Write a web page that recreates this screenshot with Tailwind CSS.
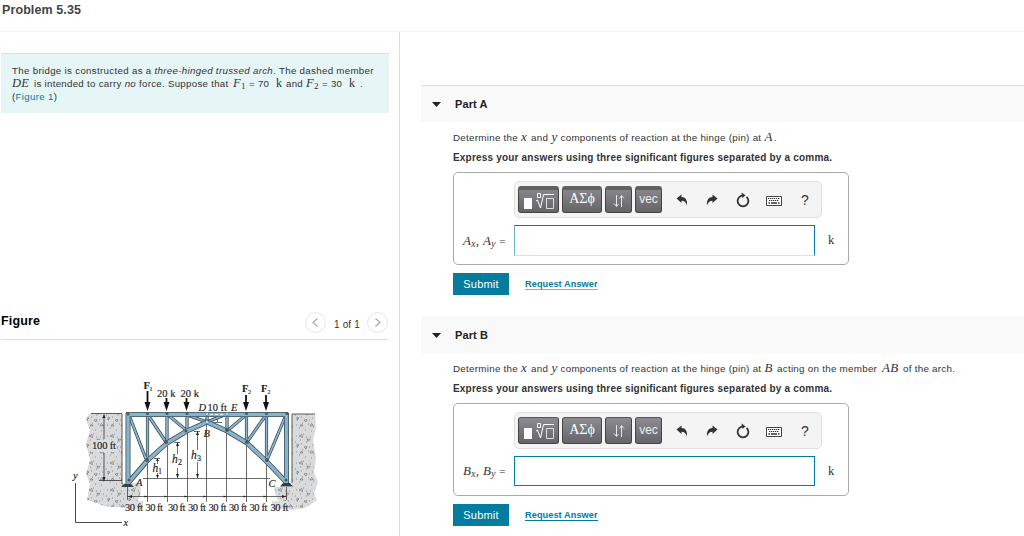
<!DOCTYPE html>
<html lang="en">
<head>
<meta charset="utf-8">
<title>Problem 5.35</title>
<script src="https://cdn.jsdelivr.net/npm/@tailwindcss/browser@4"></script>
</head>
<body class="w-[1024px] h-[536px] overflow-hidden bg-white text-[#333] font-['Liberation_Sans',sans-serif] flex flex-col">
<svg class="hidden">
  <defs>
    <symbol id="root" viewBox="0 0 32 18"><path d="M1 6h8v11H1z" fill="#fff"/><path d="M14.500 1.500h3v4h-3zM13 9l1.500-1 3 8 3-13.500H31" fill="none" stroke="#fff"/><path d="M23.500 6.500h7v10h-7z" fill="none" stroke="#ddd"/></symbol>
    <symbol id="updown" viewBox="0 0 12 14"><path d="M3.500 1v11M1 9.500l2.500 3 2-2.500M8.500 13V2M6.500 4.500l2-3 2.500 3" fill="none" stroke="#e8e8e8"/></symbol>
    <symbol id="undo" viewBox="0 0 12 12"><path d="M.5 4.500 5.500.500v2.500c4 0 6 3 5.500 8.500C10 8.500 8.500 6.800 5.500 6.800V9z" fill="#333"/></symbol>
    <symbol id="redo" viewBox="0 0 12 12"><path d="M11.500 4.500 6.500.500v2.500c-4 0-6 3-5.500 8.500C2 8.500 3.500 6.800 6.500 6.800V9z" fill="#333"/></symbol>
    <symbol id="reset" viewBox="0 0 14 16"><path d="M10.500 4.900A5.400 5.400 0 1 1 3.500 4.900Q5 3.600 7 3.500" fill="none" stroke="#333" stroke-width="1.800"/><path d="M5.500.500 9.500 3.300 6.500 6z" fill="#333"/></symbol>
    <symbol id="keys" viewBox="0 0 16 10"><path d="M.5.500h15v9H.5z" fill="#fff" stroke="#444"/><path d="M2 2.500h12M3 4.500h10" stroke="#333" stroke-dasharray="1.300 .700"/><path d="M2.500 7h1.500M5 7h6M12 7h1.500" stroke="#333" stroke-width="1.300"/></symbol>
  </defs>
</svg>
<header class="h-8 shrink-0 border-b border-[#f4f4f4] pl-[2px] pt-[2px]">
  <h1 class="text-[12.500px] leading-[16px] font-bold tracking-[0.1px] text-[#444]">Problem 5.35</h1>
</header>
<main class="flex h-[504px]">
  <section class="w-[400px] shrink-0 border-r border-[#d8dce2] flex flex-col">
    <div class="mt-[21px] ml-[1px] w-[388px] h-[60px] shrink-0 bg-[#e6f6f6] border-t border-[#d5e3e6] pl-[11px] pt-[10px] text-[9.700px] leading-[13px] whitespace-nowrap">
      <p class="tracking-[0.325px]">The bridge is constructed as a <i>three-hinged trussed arch</i>. The dashed member</p>
      <p class="tracking-[0.29px] flex h-[13px] items-baseline leading-[12px]"><span class="w-[22px] font-['Liberation_Serif',serif] text-[12.500px] italic">DE</span><span class="w-[199px]">is intended to carry <i>no</i> force. Suppose that</span><span class="w-[16px] font-['Liberation_Serif',serif] text-[12.500px]"><i>F</i><sub class="text-[9px] leading-none">1</sub></span><span class="w-[27px]">= 70</span><span class="w-[10px] font-['Liberation_Serif',serif] text-[12px]">k</span><span class="w-[20px]">and</span><span class="w-[16px] font-['Liberation_Serif',serif] text-[12.500px]"><i>F</i><sub class="text-[9px] leading-none">2</sub></span><span class="w-[27px]">= 30</span><span class="w-[11px] font-['Liberation_Serif',serif] text-[12px]">k</span><span>.</span></p>
      <p class="tracking-[0.32px]">(<a class="text-[#047c9e]">Figure 1</a>)</p>
    </div>
    <div class="mt-[193px] ml-[1px] w-[387px] h-[34px] shrink-0 border-b border-[#d9dddd] flex items-start whitespace-nowrap">
      <h2 class="mt-[7px] text-[12.500px] leading-[16px] font-bold text-black w-[304px] tracking-[0.15px]">Figure</h2>
      <svg class="mt-[6px] size-[21px]" viewBox="0 0 21 21"><circle cx="10.500" cy="10.500" r="9.900" fill="#fff" stroke="#e3e3e3"/><path d="M12.500 6.500l-4.500 4 4.500 4" fill="none" stroke="#aaa" stroke-width="1.200"/></svg>
      <span class="ml-[8px] mt-[12px] w-[26px] text-[10px] leading-[13px] tracking-[0.15px]">1 of 1</span>
      <svg class="ml-[7px] mt-[6px] size-[21px]" viewBox="0 0 21 21"><circle cx="10.500" cy="10.500" r="9.900" fill="#fff" stroke="#e3e3e3"/><path d="M8.500 6.500l4.500 4-4.500 4" fill="none" stroke="#aaa" stroke-width="1.200"/></svg>
    </div>
    <svg class="mt-[30px] ml-[60px] w-[270px] h-[166px] shrink-0" viewBox="60 370 270 166" font-family="Liberation Serif" fill="#222">
      <defs>
        <pattern id="rock" width="21" height="27" patternUnits="userSpaceOnUse">
          <rect width="21" height="27" fill="#d9dadb"/>
          <path d="M2 4h1M9 2h1M16 5h1M6 8h1M12 10h1M18 13h1M3 15h1M8 18h1M14 19h1M19 22h1M5 23h1M11 25h1M1 10h1M15 15h1M19 8h1M12 5h1M7 12h1M2 20h1M17 26h1" stroke="#777" stroke-width=".8"/>
          <path d="M5 4l3-1.500.5 3zM13 7l3 .5-2 2zM3 12l2 1-2 2zM10 15l3-.5-1 2.500zM16 21l1.500-2.500 2 2zM6 21l3 0-1.500-2z" fill="none" stroke="#666" stroke-width=".6"/>
        </pattern>
      </defs>
      <path d="M89 414H122V483H139Q143 491 138 500Q136 508 128 508L114 507Q103 507 97 503L87 500L90 484L86 474L90 460L86 444L90 430L86 420Z" fill="url(#rock)"/>
      <path d="M292 414H315L316 427L313 440L316 458L314 472L318 482L314 494L317 500L305 508L290 510Q276 504 274 487H292Z" fill="url(#rock)"/>
      <path d="M91 440h26v12H91zM126 501h17v8h-17zM272 501h16v8h-16z" fill="#dddedf"/>
      <path d="M91 413.500H122V484M104 415V439M104 453V481M99 480.500H122M292 483V414H315" fill="none" stroke="#333" stroke-width=".8"/>
      <path d="M104 414l-1.500 4h3zM104 481l-1.500-4h3z"/>
      <path d="M143 478.500H270M127.500 487V500M147.500 462V502M167.500 446V502M187.500 433V502M206.500 425V502M226.500 433V502M246.500 445V502M266.500 462V502M286.500 487V500M127.500 496.500H287M157.500 459V464M157.500 473V478M177.500 443V454M177.500 468V478M197.500 432V450M197.500 462V478M154 458.500H160M174 442.500H180M194 431.500H200M217.500 415V422M211 422.500H222M210 415.500H222" fill="none" stroke="#444" stroke-width=".8"/>
      <path d="M157.500 458l-1.500 3h3zM157.500 478l-1.500-3h3zM177.500 442l-1.500 4h3zM177.500 478l-1.500-4h3zM197.500 431l-1.500 4h3zM197.500 478l-1.500-4h3zM128 496.500l4-1.500v3zM286 496.500l-4-1.500v3zM147.500 496.500l-3-1v2zM167.500 496.500l-3-1v2zM187.500 496.500l-3-1v2zM206.500 496.500l-3-1v2zM226.500 496.500l-3-1v2zM246.500 496.500l-3-1v2zM266.500 496.500l-3-1v2z"/>
      <g fill="none" stroke-linejoin="round">
        <path d="M129 415L146 459M147.500 415V460M148 415L166 442M167 415V442M168 415L186 430M187 415V431M187 415L207 422L187 431M207 414V422M227 414L207 422M227 414V431M227 431L246 415M246.500 415V442M247 442L266 415M266.500 415V460M267 460L286 415" stroke="#34454f" stroke-width="3.200"/>
        <path d="M129 415L146 459M147.500 415V460M148 415L166 442M167 415V442M168 415L186 430M187 415V431M187 415L207 422L187 431M207 414V422M227 414L207 422M227 414V431M227 431L246 415M246.500 415V442M247 442L266 415M266.500 415V460M267 460L286 415" stroke="#8bb5cc" stroke-width="1.800"/>
        <path d="M126 414.500H288M128 413V484M286.500 413V484M129 482L147 461L167 443L187 431L207 422L227 431L247 443L267 462L286 482" stroke="#3d5260" stroke-width="5"/>
        <path d="M127 414.500H287M128 413V484M286.500 413V484M129 482L147 461L167 443L187 431L207 422L227 431L247 443L267 462L286 482" stroke="#8ab2c8" stroke-width="3.400"/>
        <path d="M210 414.500H225" stroke="#fff" stroke-width="1" stroke-dasharray="3 2"/>
      </g>
      <g fill="#555"><circle cx="128" cy="414" r="1.500"/><circle cx="147.500" cy="413.500" r="1.500"/><circle cx="167" cy="413.500" r="1.500"/><circle cx="187" cy="413.500" r="1.500"/><circle cx="246.500" cy="413.500" r="1.500"/><circle cx="266.500" cy="413.500" r="1.500"/><circle cx="287" cy="413.500" r="1.500"/><circle cx="147" cy="460" r="2"/><circle cx="166" cy="442" r="2"/><circle cx="186" cy="431" r="1.500"/><circle cx="227" cy="430" r="2"/><circle cx="247" cy="442" r="2"/><circle cx="267" cy="460" r="2"/><circle cx="129" cy="480" r="1.500"/><circle cx="286" cy="480" r="1.500"/></g>
      <g fill="#dff3ff" stroke="#2b82a8" stroke-width=".7"><circle cx="207" cy="414" r="1.500"/><circle cx="227" cy="414" r="1.500"/><circle cx="207" cy="422" r="1.500"/></g>
      <path d="M124 484h7l3 3H121zM283 483h7l3 3.500H280z" fill="#2d414e"/>
      <path d="M147.500 391V405M166.500 398V405M186.500 398V405M246 395V405M266 395V405" stroke="#111" stroke-width="1.800"/>
      <path d="M144.500 402h6l-3 9zM163.500 402h6l-3 9zM183.500 402h6l-3 9zM243 402h6l-3 9zM263 402h6l-3 9z" fill="#111"/>
      <g font-size="10.500" stroke="#222" stroke-width=".15">
        <g font-weight="bold"><text x="143.500" y="389">F</text><text x="242" y="392">F</text><text x="261" y="392">F</text></g>
        <text x="149.500" y="391" font-size="6">1</text><text x="248" y="394" font-size="6">2</text><text x="267.500" y="394" font-size="6">2</text>
        <text x="157" y="397" textLength="18.500">20 k</text><text x="180.500" y="397" textLength="18.500">20 k</text>
        <text x="198.500" y="411" font-style="italic">D</text><text x="207.500" y="411" textLength="19.500">10 ft</text><text x="231" y="411" font-style="italic">E</text>
        <text x="203.500" y="437" font-style="italic">B</text><text x="136" y="486" font-style="italic">A</text><text x="268.500" y="487" font-style="italic">C</text>
        <text x="92" y="449" textLength="24">100 ft</text>
        <g font-style="italic" font-size="11.500"><text x="152.500" y="472">h</text><text x="172" y="463">h</text><text x="191" y="459">h</text></g>
        <g font-size="8"><text x="158" y="474">1</text><text x="178" y="465">2</text><text x="197" y="461">3</text></g>
        <text x="125" y="511" textLength="18">30 ft</text><text x="145.500" y="511" textLength="17.500">30 ft</text><text x="168" y="511" textLength="17.500">30 ft</text><text x="188" y="511" textLength="18">30 ft</text><text x="208.500" y="511" textLength="18">30 ft</text><text x="229" y="511" textLength="18">30 ft</text><text x="249.500" y="511" textLength="18">30 ft</text><text x="270.500" y="511" textLength="18">30 ft</text>
        <text x="73" y="479" font-style="italic">y</text><text x="123.500" y="526" font-style="italic">x</text>
      </g>
      <path d="M75.500 483V522.500H122" fill="none" stroke="#333" stroke-width=".9"/>
    </svg>
  </section>
  <section class="w-[624px] flex flex-col pl-[21px] pt-[53px] whitespace-nowrap">
    <div class="h-[231px] shrink-0 flex flex-col">
      <div class="h-[37px] shrink-0 bg-[#f9f9f9] border-t border-[#dedede] flex items-center pl-[11px]">
        <svg class="w-[9px] h-[5px] mr-[14px]" viewBox="0 0 9 5"><path d="M0 0h9L4.500 5z" fill="#222"/></svg>
        <h3 class="text-[11px] leading-[14px] font-bold text-[#222] tracking-[0.1px]">Part A</h3>
      </div>
      <p class="mt-[8px] ml-[32px] h-[14px] flex items-baseline text-[9.800px] leading-[14px] tracking-[0.27px]"><span class="w-[68px]">Determine the</span><span class="w-[10px] font-['Liberation_Serif',serif] text-[13px] italic">x</span><span class="w-[20.500px]">and</span><span class="w-[9px] font-['Liberation_Serif',serif] text-[13px] italic">y</span><span class="w-[204px]">components of reaction at the hinge (pin) at</span><span class="w-[9.500px] font-['Liberation_Serif',serif] text-[13px] italic">A</span><span>.</span></p>
      <p class="mt-[7px] ml-[32px] h-[14px] text-[10px] leading-[14px] font-bold tracking-[0.19px]">Express your answers using three significant figures separated by a comma.</p>
      <div class="mt-[7px] ml-[32px] w-[396px] h-[93px] shrink-0 rounded-[5px] border border-[#aaa] pl-[60px] pt-[8px]">
        <div class="w-[308px] h-[37px] rounded-[5px] border border-[#e0e0e0] bg-[#f4f4f4] flex items-center pl-[3px]">
          <span class="w-[41px] h-[27px] rounded-[3px] border border-[#444] border-t-4 border-t-[#606060] bg-linear-to-b from-[#85858b] to-[#666669] flex items-center justify-center"><svg class="w-[32px] h-[18px]"><use href="#root"/></svg></span>
          <span class="ml-[3px] w-[40px] h-[27px] rounded-[3px] border border-[#444] border-t-4 border-t-[#606060] bg-linear-to-b from-[#85858b] to-[#666669] text-white font-['Liberation_Serif',serif] text-[14px] leading-[18px] text-center">ΑΣϕ</span>
          <span class="ml-[3px] w-[27px] h-[27px] rounded-[3px] border border-[#444] border-t-4 border-t-[#606060] bg-linear-to-b from-[#85858b] to-[#666669] flex items-center justify-center"><svg class="w-[12px] h-[14px]"><use href="#updown"/></svg></span>
          <span class="ml-[3px] w-[27px] h-[27px] rounded-[3px] border border-[#444] border-t-4 border-t-[#606060] bg-linear-to-b from-[#85858b] to-[#666669] text-[#eee] text-[12px] leading-[18px] text-center">vec</span>
          <svg class="ml-[14px] w-[12px] h-[12px]"><use href="#undo"/></svg>
          <svg class="ml-[18px] w-[12px] h-[12px]"><use href="#redo"/></svg>
          <svg class="ml-[18px] w-[14px] h-[16px]"><use href="#reset"/></svg>
          <svg class="ml-[16px] mt-[3px] w-[16px] h-[10px]"><use href="#keys"/></svg>
          <span class="ml-[19px] text-[14px] leading-[18px] text-[#333]">?</span>
        </div>
        <div class="mt-[7px] -ml-[51px] flex items-center">
          <span class="w-[51px] font-['Liberation_Serif',serif] text-[13px] leading-[16px] tracking-[0.3px]"><i>A</i><sub class="text-[9.500px] italic leading-none">x</sub>, <i>A</i><sub class="text-[9.500px] italic leading-none">y</sub> <span class="text-[11px]">=</span></span>
          <span class="w-[301px] h-[31px] border border-[#047c9e] border-l-[#6fb3c6] border-b-[#cfe5ea] bg-white"></span>
          <span class="ml-[13px] font-['Liberation_Serif',serif] text-[12.500px]">k</span>
        </div>
      </div>
      <div class="mt-[8px] ml-[32px] flex items-center">
        <span class="w-[56px] h-[22px] bg-[#047c9e] text-white text-[11px] leading-[22px] tracking-[0.2px] text-center">Submit</span>
        <a class="ml-[16px] text-[9.200px] leading-[10px] font-bold text-[#047c9e] border-b border-[#7cb8ca] tracking-[0.07px]">Request Answer</a>
      </div>
    </div>
    <div class="h-[231px] shrink-0 flex flex-col">
      <div class="h-[37px] shrink-0 bg-[#f9f9f9] border-t border-[#f9f9f9] flex items-center pl-[11px]">
        <svg class="w-[9px] h-[5px] mr-[14px]" viewBox="0 0 9 5"><path d="M0 0h9L4.500 5z" fill="#222"/></svg>
        <h3 class="text-[11px] leading-[14px] font-bold text-[#222] tracking-[0.1px]">Part B</h3>
      </div>
      <p class="mt-[8px] ml-[32px] h-[14px] flex items-baseline text-[9.800px] leading-[14px] tracking-[0.27px]"><span class="w-[68px]">Determine the</span><span class="w-[10px] font-['Liberation_Serif',serif] text-[13px] italic">x</span><span class="w-[20.500px]">and</span><span class="w-[9px] font-['Liberation_Serif',serif] text-[13px] italic">y</span><span class="w-[204px]">components of reaction at the hinge (pin) at</span><span class="w-[12.500px] font-['Liberation_Serif',serif] text-[13px] italic">B</span><span class="w-[105px]">acting on the member</span><span class="w-[21px] font-['Liberation_Serif',serif] text-[13px] italic">AB</span><span>of the arch.</span></p>
      <p class="mt-[7px] ml-[32px] h-[14px] text-[10px] leading-[14px] font-bold tracking-[0.19px]">Express your answers using three significant figures separated by a comma.</p>
      <div class="mt-[7px] ml-[32px] w-[396px] h-[93px] shrink-0 rounded-[5px] border border-[#aaa] pl-[60px] pt-[8px]">
        <div class="w-[308px] h-[37px] rounded-[5px] border border-[#e0e0e0] bg-[#f4f4f4] flex items-center pl-[3px]">
          <span class="w-[41px] h-[27px] rounded-[3px] border border-[#444] border-t-[#555] bg-linear-to-b from-[#8c8c92] to-[#666669] flex items-center justify-center"><svg class="w-[32px] h-[18px]"><use href="#root"/></svg></span>
          <span class="ml-[3px] w-[40px] h-[27px] rounded-[3px] border border-[#444] border-t-[#555] bg-linear-to-b from-[#8c8c92] to-[#666669] text-white font-['Liberation_Serif',serif] text-[14px] leading-[24px] text-center">ΑΣϕ</span>
          <span class="ml-[3px] w-[27px] h-[27px] rounded-[3px] border border-[#444] border-t-[#555] bg-linear-to-b from-[#8c8c92] to-[#666669] flex items-center justify-center"><svg class="w-[12px] h-[14px]"><use href="#updown"/></svg></span>
          <span class="ml-[3px] w-[27px] h-[27px] rounded-[3px] border border-[#444] border-t-[#555] bg-linear-to-b from-[#8c8c92] to-[#666669] text-[#eee] text-[12px] leading-[24px] text-center">vec</span>
          <svg class="ml-[14px] w-[12px] h-[12px]"><use href="#undo"/></svg>
          <svg class="ml-[18px] w-[12px] h-[12px]"><use href="#redo"/></svg>
          <svg class="ml-[18px] w-[14px] h-[16px]"><use href="#reset"/></svg>
          <svg class="ml-[16px] mt-[3px] w-[16px] h-[10px]"><use href="#keys"/></svg>
          <span class="ml-[19px] text-[14px] leading-[18px] text-[#333]">?</span>
        </div>
        <div class="mt-[7px] -ml-[51px] flex items-center">
          <span class="w-[51px] font-['Liberation_Serif',serif] text-[13px] leading-[16px] tracking-[0.3px]"><i>B</i><sub class="text-[9.500px] italic leading-none">x</sub>, <i>B</i><sub class="text-[9.500px] italic leading-none">y</sub> <span class="text-[11px]">=</span></span>
          <span class="w-[301px] h-[30px] border border-[#047c9e] bg-white"></span>
          <span class="ml-[13px] font-['Liberation_Serif',serif] text-[12.500px]">k</span>
        </div>
      </div>
      <div class="mt-[8px] ml-[32px] flex items-center">
        <span class="w-[56px] h-[22px] bg-[#047c9e] text-white text-[11px] leading-[22px] tracking-[0.2px] text-center">Submit</span>
        <a class="ml-[16px] text-[9.200px] leading-[10px] font-bold text-[#047c9e] border-b border-[#047c9e] tracking-[0.07px]">Request Answer</a>
      </div>
    </div>
  </section>
</main>
</body>
</html>
